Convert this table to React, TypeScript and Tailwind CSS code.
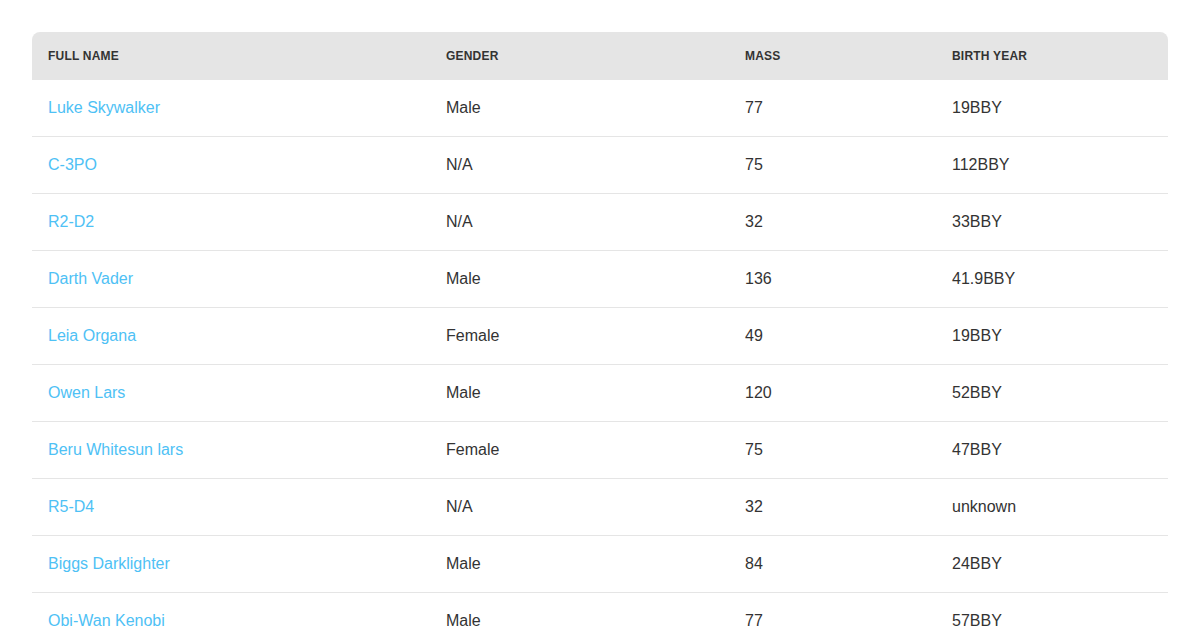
import React from 'react';

const people = [
  { name: 'Luke Skywalker', gender: 'Male', mass: '77', birth: '19BBY' },
  { name: 'C-3PO', gender: 'N/A', mass: '75', birth: '112BBY' },
  { name: 'R2-D2', gender: 'N/A', mass: '32', birth: '33BBY' },
  { name: 'Darth Vader', gender: 'Male', mass: '136', birth: '41.9BBY' },
  { name: 'Leia Organa', gender: 'Female', mass: '49', birth: '19BBY' },
  { name: 'Owen Lars', gender: 'Male', mass: '120', birth: '52BBY' },
  { name: 'Beru Whitesun lars', gender: 'Female', mass: '75', birth: '47BBY' },
  { name: 'R5-D4', gender: 'N/A', mass: '32', birth: 'unknown' },
  { name: 'Biggs Darklighter', gender: 'Male', mass: '84', birth: '24BBY' },
  { name: 'Obi-Wan Kenobi', gender: 'Male', mass: '77', birth: '57BBY' },
];

const App = () => {
  return (
    <div className="min-h-screen bg-white p-8 font-['Liberation_Sans',Arial,sans-serif]">
      {/* People table */}
      <table className="w-full table-fixed border-separate border-spacing-0">
        <colgroup>
          <col className="w-[398px]" />
          <col className="w-[299px]" />
          <col className="w-[207px]" />
          <col />
        </colgroup>
        <thead>
          <tr className="bg-[#e5e5e5] text-left text-xs font-bold uppercase tracking-[0.2px] text-[#333]">
            <th className="h-12 rounded-tl-lg px-4">Full Name</th>
            <th className="h-12 px-4">Gender</th>
            <th className="h-12 px-4">Mass</th>
            <th className="h-12 rounded-tr-lg px-4">Birth Year</th>
          </tr>
        </thead>
        <tbody>
          {people.map((p) => (
            <tr key={p.name} className="text-base text-[#333]">
              <td className="h-[57px] border-b border-[#e5e5e5] px-4">
                <a href="#" className="text-[#4ec1f5]">{p.name}</a>
              </td>
              <td className="h-[57px] border-b border-[#e5e5e5] px-4">{p.gender}</td>
              <td className="h-[57px] border-b border-[#e5e5e5] px-4">{p.mass}</td>
              <td className="h-[57px] border-b border-[#e5e5e5] px-4">{p.birth}</td>
            </tr>
          ))}
        </tbody>
      </table>
    </div>
  );
};

export default App;
